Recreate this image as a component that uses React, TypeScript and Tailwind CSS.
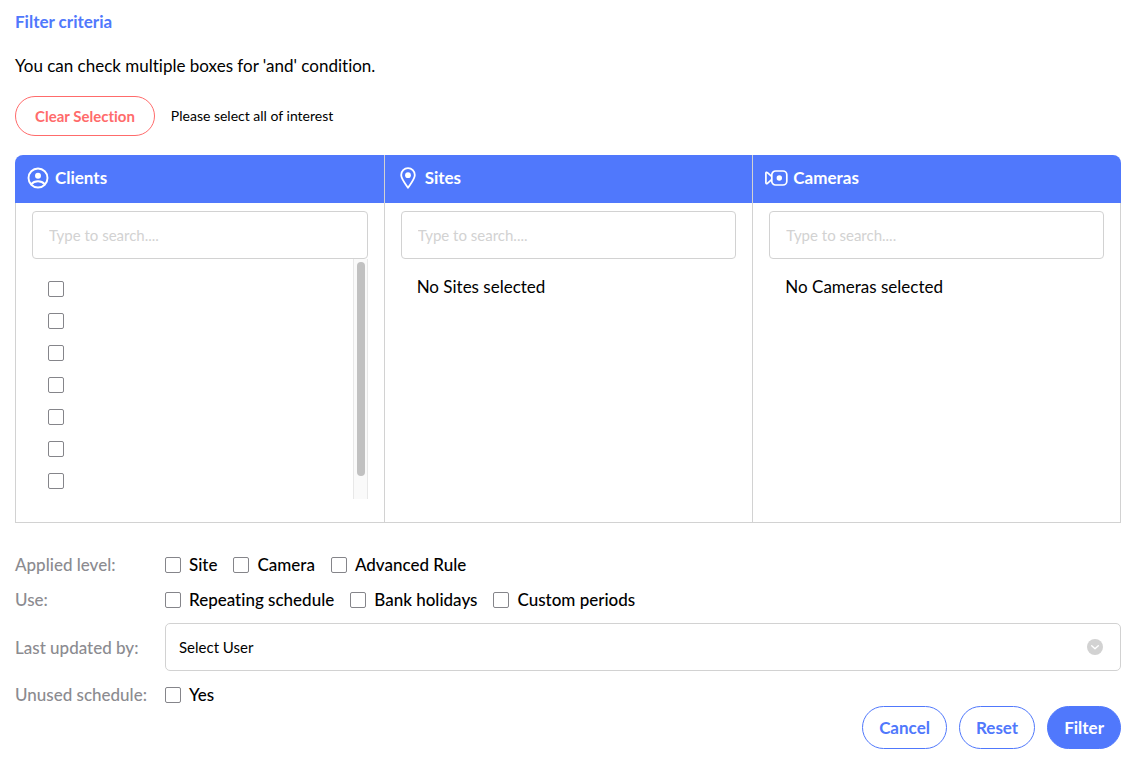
import { useState } from "react";
import type { ReactNode } from "react";

function ClientIcon() {
  return (
    <svg viewBox="0 0 24 22" className="h-[22px] w-6 shrink-0" fill="none" stroke="currentColor" strokeWidth="1.9" aria-hidden="true">
      <circle cx="11" cy="11" r="9.5" />
      <circle cx="11" cy="8.7" r="3" fill="currentColor" stroke="none" />
      <path d="M4.4 17.2C6 15.2 8.3 14.3 11 14.3s5 .9 6.6 2.9" />
    </svg>
  );
}

function PinIcon() {
  return (
    <svg viewBox="-3 0 24 22" className="h-[22px] w-6 shrink-0" fill="none" stroke="currentColor" strokeWidth="1.8" strokeLinejoin="round" aria-hidden="true">
      <path d="M8 20.8C5.6 17.1 1.2 12 1.2 8a6.8 6.8 0 0 1 13.6 0c0 4-4.4 9.100-6.800 12.800Z" />
      <circle cx="8" cy="8.200" r="2.900" fill="currentColor" stroke="none" />
    </svg>
  );
}

function CameraIcon() {
  return (
    <svg viewBox="0 0 24 16" className="h-4 w-6 shrink-0" fill="none" stroke="currentColor" strokeWidth="1.7" strokeLinejoin="round" aria-hidden="true">
      <rect x="6.8" y="1" width="15" height="14" rx="3.8" />
      <path d="M6.600 6.400 2.400 2.600C1.700 2 .9 2.300.9 3.200v9.600c0 .9.8 1.200 1.500.6l4.200-3.800" />
      <circle cx="14.300" cy="8" r="2.700" fill="currentColor" stroke="none" />
    </svg>
  );
}

function Check({ label, hidden }: { label: string; hidden?: boolean }) {
  return (
    <label className="flex items-center gap-2">
      <input
        type="checkbox"
        aria-label={hidden ? label : undefined}
        className="size-4 shrink-0 appearance-none rounded-xs border border-[#85858a] bg-white checked:border-[#5078fc] checked:bg-[#5078fc]"
      />
      {hidden ? null : <span>{label}</span>}
    </label>
  );
}

function HeaderCell({ icon, title }: { icon: ReactNode; title: string }) {
  return (
    <div className="flex h-12 items-center gap-1 border-[#d2d2d2] pb-0.5 pl-3 text-[17px] font-bold not-first:border-l">
      {icon}
      <h2>{title}</h2>
    </div>
  );
}

function Column({ name, children }: { name: string; children: ReactNode }) {
  return (
    <section aria-label={name} className="min-w-0 border-l border-[#d2d2d2] px-4 pt-2 pb-[23px] last:border-r">
      <input
        type="text"
        aria-label={`Search ${name}`}
        placeholder="Type to search...."
        className="block h-12 w-full rounded-sm border border-[#d2d2d2] px-4 text-[15px] font-normal outline-none placeholder:text-[#d2d2d2]"
      />
      <div className="h-60">{children}</div>
    </section>
  );
}

function Row({ label, children }: { label: string; children: ReactNode }) {
  return (
    <div role="group" aria-label={label} className="flex items-center">
      <span className="w-[150px] shrink-0 text-[#8b8b90]">{label}</span>
      {children}
    </div>
  );
}

const clients = ["Client 1", "Client 2", "Client 3", "Client 4", "Client 5", "Client 6", "Client 7"];

export default function App() {
  const [user, setUser] = useState("");
  return (
    <main className="bg-white pt-2.5 pr-[13px] pb-3.5 pl-[15px] font-['Lato',sans-serif] text-[17px] leading-6 font-medium text-black [font-variant-ligatures:none]">
      <h1 className="font-bold text-[#5078fc]">Filter criteria</h1>
      <p className="mt-5 font-normal">You can check multiple boxes for 'and' condition.</p>
      <div className="mt-[18px] flex items-center gap-4">
        <button type="button" className="h-10 rounded-full border border-[#ff6b6b] px-[19px] text-[15px] font-bold text-[#ff6b6b]">
          Clear Selection
        </button>
        <span className="text-[14px] font-normal">Please select all of interest</span>
      </div>

      <div className="mt-[19px]">
        <div className="grid grid-cols-3 rounded-t-lg bg-[#5078fc] text-white">
          <HeaderCell icon={<ClientIcon />} title="Clients" />
          <HeaderCell icon={<PinIcon />} title="Sites" />
          <HeaderCell icon={<CameraIcon />} title="Cameras" />
        </div>
        <div className="grid grid-cols-3 border-b border-[#d2d2d2]">
          <Column name="Clients">
            <div className="flex h-full justify-between">
              <div className="flex flex-col gap-4 pt-[22px] pl-4">
                {clients.map((c) => (
                  <Check key={c} label={c} hidden />
                ))}
              </div>
              <div aria-hidden="true" className="w-[15px] border-x border-[#e8e8e8] bg-[#fafafa] px-[3px] pt-[3px]">
                <div className="h-[214px] w-2 rounded-full bg-[#c1c1c1]" />
              </div>
            </div>
          </Column>
          <Column name="Sites">
            <p className="px-4 pt-4 font-normal">No Sites selected</p>
          </Column>
          <Column name="Cameras">
            <p className="px-4 pt-4 font-normal">No Cameras selected</p>
          </Column>
        </div>
      </div>

      <form className="mt-[30px] leading-[23px]" onSubmit={(e) => e.preventDefault()}>
        <div className="flex flex-col gap-3">
          <Row label="Applied level:">
            <div className="flex gap-4">
              <Check label="Site" />
              <Check label="Camera" />
              <Check label="Advanced Rule" />
            </div>
          </Row>
          <Row label="Use:">
            <div className="flex gap-4">
              <Check label="Repeating schedule" />
              <Check label="Bank holidays" />
              <Check label="Custom periods" />
            </div>
          </Row>
          <Row label="Last updated by:">
            <div className="relative min-w-0 flex-1">
              <select
                aria-label="Last updated by"
                value={user}
                onChange={(e) => setUser(e.target.value)}
                className="block h-12 w-full appearance-none rounded-[5px] border border-[#d2d2d2] bg-white px-[13px] text-[15px] font-normal"
              >
                <option value="">Select User</option>
              </select>
              <svg viewBox="0 0 16 16" className="pointer-events-none absolute top-4 right-[18px] size-4" aria-hidden="true">
                <circle cx="8" cy="8" r="8" fill="#d2d2d2" />
                <path d="m4.7 6.7 3.3 3 3.3-3" fill="none" stroke="#fff" strokeWidth="1.4" strokeLinecap="round" strokeLinejoin="round" />
              </svg>
            </div>
          </Row>
          <Row label="Unused schedule:">
            <Check label="Yes" />
          </Row>
        </div>
        <div className="flex justify-end gap-3 text-[17px] font-bold">
          <button type="button" className="h-[43px] rounded-full border border-[#5078fc] px-4 text-[#5078fc]">Cancel</button>
          <button type="reset" className="h-[43px] rounded-full border border-[#5078fc] px-4 text-[#5078fc]">Reset</button>
          <button type="submit" className="h-[43px] rounded-full border border-[#5078fc] bg-[#5078fc] px-4 text-white">Filter</button>
        </div>
      </form>
    </main>
  );
}
